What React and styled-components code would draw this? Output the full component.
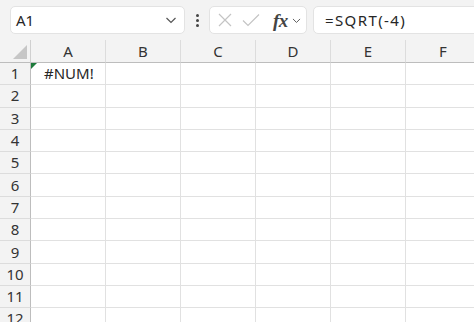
import React from "react";
import styled, { createGlobalStyle } from "styled-components";

const GlobalStyle = createGlobalStyle`
  html, body {
    margin: 0;
    padding: 0;
    background: #ffffff;
  }
  body {
    font-family: "Noto Sans", "Open Sans", sans-serif;
    color: #262626;
  }
`;

const columns = ["A", "B", "C", "D", "E", "F"];
const rows = Array.from({ length: 12 }, (_, i) => i + 1);

const Sheet = () => {
  return (
    <Window>
      <GlobalStyle />
      <Toolbar>
        <NameBox>
          <span>A1</span>
          <Chevron size={14} />
        </NameBox>
        <Dots>
          <i />
          <i />
          <i />
        </Dots>
        <ToolBox>
          <svg width="16" height="16" viewBox="0 0 16 16">
            <path d="M2 2 L14 14 M14 2 L2 14" stroke="#c4c4c4" strokeWidth="1.2" fill="none" />
          </svg>
          <svg width="20" height="16" viewBox="0 0 20 16">
            <path d="M2 8.5 L7 13.5 L18 2.5" stroke="#c4c4c4" strokeWidth="1.2" fill="none" />
          </svg>
          <Fx>fx</Fx>
          <Chevron size={11} />
        </ToolBox>
        <FormulaBar>=SQRT(-4)</FormulaBar>
      </Toolbar>
      <Grid>
        <Corner>
          <svg width="14" height="14" viewBox="0 0 14 14">
            <polygon points="14,0 14,14 0,14" fill="#c6c6c6" />
          </svg>
        </Corner>
        {columns.map((c) => (
          <ColHead key={c}>{c}</ColHead>
        ))}
        {rows.map((r) => (
          <React.Fragment key={r}>
            <RowHead>{r}</RowHead>
            {columns.map((c) => (
              <Cell key={c} $error={r === 1 && c === "A"}>
                {r === 1 && c === "A" ? "#NUM!" : ""}
              </Cell>
            ))}
          </React.Fragment>
        ))}
      </Grid>
    </Window>
  );
};

const Chevron = ({ size }) => (
  <svg width={size} height={size} viewBox="0 0 14 14">
    <path d="M2.5 5 L7 9.5 L11.5 5" stroke="#555" strokeWidth="1.2" fill="none" />
  </svg>
);

export default Sheet;

const Window = styled.div`
  width: 474px;
  height: 322px;
  overflow: hidden;
  display: flex;
  flex-direction: column;
`;

const Toolbar = styled.div`
  height: 40px;
  flex-shrink: 0;
  background: #f3f3f3;
  display: flex;
  align-items: center;
  padding-left: 10px;
  box-sizing: border-box;
  & > * {
    flex-shrink: 0;
  }
`;

const Box = styled.div`
  height: 28px;
  box-sizing: border-box;
  background: #ffffff;
  border: 1px solid #e3e3e3;
  border-radius: 5px;
  display: flex;
  align-items: center;
`;

const NameBox = styled(Box)`
  width: 175px;
  padding: 0 6px 0 5px;
  justify-content: space-between;
  font-size: 15px;
  color: #262626;
`;

const Dots = styled.div`
  width: 24px;
  display: flex;
  flex-direction: column;
  align-items: center;
  gap: 2px;
  i {
    width: 3px;
    height: 3px;
    border-radius: 50%;
    background: #444;
  }
`;

const ToolBox = styled(Box)`
  width: 98px;
  padding: 0 4px 0 7px;
  gap: 8px;
  svg:last-child {
    margin-left: -5px;
  }
`;

const Fx = styled.span`
  font-family: "Liberation Serif", "DejaVu Serif", serif;
  font-style: italic;
  font-weight: bold;
  font-size: 19px;
  color: #444;
  margin-left: 4px;
  letter-spacing: -0.5px;
  line-height: 1;
`;

const FormulaBar = styled(Box)`
  width: 180px;
  margin-left: 6px;
  padding-left: 11px;
  font-size: 15px;
  letter-spacing: 1.4px;
  color: #262626;
`;

const Grid = styled.div`
  display: grid;
  grid-template-columns: 31px repeat(6, 75px);
  grid-template-rows: 23px repeat(12, 22.3px);
  font-size: 15px;
`;

const Corner = styled.div`
  background: #f3f3f3;
  border-right: 1px solid #d0d0d0;
  border-bottom: 1px solid #bdbdbd;
  box-sizing: border-box;
  display: flex;
  align-items: flex-end;
  justify-content: flex-end;
  padding: 0 3px 3px 0;
`;

const ColHead = styled.div`
  background: #f3f3f3;
  border-right: 1px solid #dcdcdc;
  border-bottom: 1px solid #bdbdbd;
  box-sizing: border-box;
  display: flex;
  align-items: center;
  justify-content: center;
  color: #333;
  line-height: 1;
  padding-top: 1px;
`;

const RowHead = styled.div`
  background: #f3f3f3;
  border-right: 1px solid #bdbdbd;
  border-bottom: 1px solid #dcdcdc;
  box-sizing: border-box;
  display: flex;
  align-items: center;
  justify-content: center;
  color: #333;
  line-height: 1;
`;

const Cell = styled.div`
  position: relative;
  border-right: 1px solid #e1e1e1;
  border-bottom: 1px solid #e1e1e1;
  box-sizing: border-box;
  display: flex;
  align-items: center;
  padding-left: 13px;
  color: #262626;
  line-height: 1;
  &::before {
    content: "";
    display: ${(p) => (p.$error ? "block" : "none")};
    position: absolute;
    top: 0;
    left: 0;
    border-top: 6px solid #1e7b3c;
    border-right: 6px solid transparent;
  }
`;
